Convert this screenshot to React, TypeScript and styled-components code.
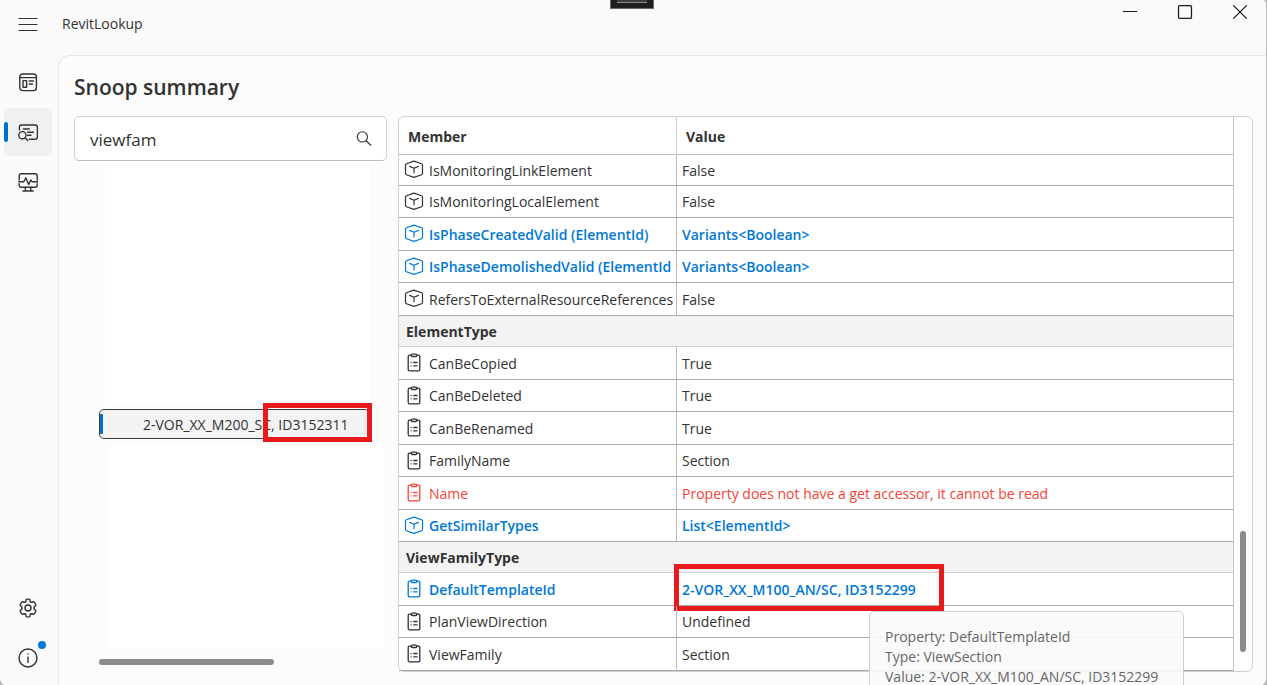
import React from "react";
import styled, { createGlobalStyle, css } from "styled-components";

const GlobalStyle = createGlobalStyle`
  *, *::before, *::after { box-sizing: border-box; }
  body {
    margin: 0;
    background: #b9b9b9;
    color: #323232;
    font-family: "Open Sans", "Noto Sans", sans-serif;
    font-size: 14px;
    line-height: 20px;
  }
  button, input { font: inherit; color: inherit; }
  button { border: 0; padding: 0; background: none; }
`;

const Window = styled.div`
  position: relative;
  display: flex;
  flex-direction: column;
  min-height: 100vh;
  margin-right: 1px;
  overflow: hidden;
  background: #fafafa;
  border-radius: 0 4px 8px 8px;
`;

const TitleBar = styled.header`
  display: flex;
  align-items: flex-start;
  height: 55px;
`;

const MenuButton = styled.button`
  display: flex;
  align-items: center;
  justify-content: center;
  width: 56px;
  height: 49px;
`;

const AppName = styled.span`
  flex: 1;
  padding: 14px 6px;
`;

const CaptionButton = styled.button`
  display: flex;
  align-items: center;
  justify-content: center;
  width: 55px;
  height: 24px;
  padding-left: 2px;
  color: #1a1a1a;
`;

const DockHandle = styled.div`
  position: absolute;
  top: 0;
  left: 50%;
  width: 44px;
  height: 9px;
  margin-left: -23px;
  padding: 0 6px;
  background: #1f1f1f;
  border: 1px solid #6a6a6a;
  border-top: 0;
`;

const DockGrip = styled.div`
  height: 3px;
  background: #3c3c3c;
  border-bottom: 1px solid #8a8a8a;
`;

const Body = styled.div`
  display: flex;
  flex: 1;
`;

const Rail = styled.nav`
  display: flex;
  flex-direction: column;
  gap: 2px;
  width: 58px;
  padding: 3px 4px 4px;
`;

const RailSpacer = styled.div`
  flex: 1;
`;

const RailButton = styled.button<{ $active?: boolean }>`
  position: relative;
  display: flex;
  align-items: center;
  justify-content: center;
  width: 48px;
  height: 48px;
  border-radius: 5px;
  ${(p) =>
    p.$active &&
    css`
      background: #f0f0f0;
      &::before {
        content: "";
        position: absolute;
        left: 0;
        top: 14px;
        width: 4px;
        height: 20px;
        border-radius: 2px;
        background: #0070cb;
      }
    `}
`;

const Dot = styled.span`
  position: absolute;
  top: 7px;
  right: 6px;
  width: 8px;
  height: 8px;
  border-radius: 50%;
  background: #0078d7;
`;

const Page = styled.main`
  display: flex;
  flex: 1;
  flex-direction: column;
  min-width: 0;
  padding: 15px 13px 14px 15px;
  background: #fcfcfc;
  border: solid #e8e8e8;
  border-width: 1px 0 0 1px;
  border-top-left-radius: 12px;
`;

const Heading = styled.h1`
  margin: 0;
  height: 45px;
  font-size: 21px;
  line-height: 32px;
  font-weight: 600;
`;

const Columns = styled.div`
  display: flex;
  flex: 1;
  gap: 11px;
`;

const TreePane = styled.section`
  display: flex;
  flex-direction: column;
  flex: none;
  width: 313px;
`;

const SearchBox = styled.label`
  display: flex;
  align-items: center;
  height: 45px;
  padding: 0 14px 0 15px;
  background: #fff;
  border: 1px solid #d2d2d2;
  border-bottom-color: #bdbdbd;
  border-radius: 5px;
`;

const SearchInput = styled.input`
  flex: 1;
  min-width: 0;
  padding: 2px 0 0;
  border: 0;
  outline: 0;
  background: none;
  font-size: 17px;
  line-height: 24px;
`;

const Tree = styled.div`
  display: flex;
  flex: 1;
  flex-direction: column;
  padding: 7px 2px 7px 25px;
`;

const BlankTop = styled.div`
  height: 234px;
  margin: 0 15px 7px 6px;
  background: #fff;
`;

const BlankBottom = styled.div`
  flex: 1;
  margin: 7px 0 11px 9px;
  background: #fff;
`;

const TreeItem = styled.button`
  position: relative;
  height: 30px;
  margin-right: 15px;
  padding: 1px 0 0 43px;
  text-align: left;
  white-space: nowrap;
  background: #f3f3f3;
  border: 1px solid #3c3c3c;
  border-radius: 5px;
  &::before {
    content: "";
    position: absolute;
    left: 0;
    top: 4px;
    width: 3px;
    height: 20px;
    border-radius: 1px;
    background: #0070cb;
  }
`;

const Highlight = styled.span<{ $at: "tree" | "cell" }>`
  position: absolute;
  border: 5px solid #e81a1c;
  pointer-events: none;
  ${(p) =>
    p.$at === "tree"
      ? css`
          inset: -7px -3px -4px auto;
          width: 109px;
        `
      : css`
          top: -9px;
          left: -3px;
          width: 270px;
          height: 47px;
        `}
`;

const HorizontalThumb = styled.div`
  width: 175px;
  height: 6px;
  border-radius: 3px;
  background: #8b8b8b;
`;

const GridFrame = styled.section`
  display: flex;
  flex: 1;
  min-width: 0;
  background: #fff;
  border: 1px solid #d0d0d0;
  border-radius: 6px;
`;

const Grid = styled.table`
  flex: 1;
  width: 100%;
  table-layout: fixed;
  border-spacing: 0;
  border-right: 1px solid #c4c4c4;
`;

const HeadCell = styled.th`
  height: 38px;
  padding: 2px 9px 0;
  text-align: left;
  font-weight: 700;
  border-bottom: 1px solid #bdbdbd;
  &:first-child {
    width: 278px;
    padding-left: 9px;
    border-right: 1px solid #cfcfcf;
  }
`;

const GroupCell = styled.th`
  height: 31px;
  padding: 1px 7px 0;
  text-align: left;
  font-weight: 700;
  background: #f3f3f3;
  border-bottom: 1px solid #d0d0d0;
`;

type Tone = "normal" | "link" | "error";
const toneColor = { normal: "#323232", link: "#0078d4", error: "#f44336" };

const Row = styled.tr<{ $tone: Tone; $height: number }>`
  height: ${(p) => p.$height}px;
  color: ${(p) => toneColor[p.$tone]};
  font-weight: ${(p) => (p.$tone === "link" ? 600 : 400)};
`;

const Cell = styled.td`
  position: relative;
  padding: 1px 5px 0;
  white-space: nowrap;
  border-bottom: 1px solid #a9a9a9;
  &:first-child {
    padding: 0 1px 0 5px;
    border-right: 1px solid #b9b9b9;
  }
`;

const Member = styled.div`
  display: flex;
  align-items: center;
  gap: 5px;
  svg {
    flex: none;
  }
`;

const MemberName = styled.span`
  padding-top: 1px;
`;

const ValueLink = styled.a`
  color: inherit;
  text-decoration: none;
`;

const ScrollTrack = styled.div`
  display: flex;
  align-items: flex-end;
  justify-content: center;
  width: 18px;
  padding-bottom: 19px;
`;

const VerticalThumb = styled.div`
  width: 6px;
  height: 121px;
  border-radius: 3px;
  background: #8b8b8b;
`;

const Tooltip = styled.div`
  position: absolute;
  z-index: 1;
  top: 38px;
  left: 192px;
  width: 315px;
  padding: 15px;
  color: #666;
  font-weight: 400;
  background: rgba(249, 249, 249, 0.9);
  border: 1px solid #d0d0d0;
  border-radius: 5px;
`;

const Icon = ({ size = 20, width = 1.4, children }: { size?: number; width?: number; children: React.ReactNode }) => (
  <svg
    width={size}
    height={size}
    viewBox="0 0 20 20"
    fill="none"
    stroke="currentColor"
    strokeWidth={width}
    strokeLinecap="round"
    strokeLinejoin="round"
    aria-hidden="true"
  >
    {children}
  </svg>
);

const MethodIcon = () => (
  <Icon width={1.2}>
    <path d="M10 1.1 17.6 3.7Q18.5 4 18.5 4.8V13.6Q18.5 14.4 17.6 14.7L10 17.4 2.4 14.7Q1.5 14.4 1.5 13.6V4.8Q1.5 4 2.4 3.7Z" />
    <path d="M5.6 6.4 10 8.2 14.4 6.4M10 8.2V12.8" />
  </Icon>
);

const PropertyIcon = () => (
  <Icon width={1.3}>
    <path d="M7.2 2.2H5.5Q4.2 2.2 4.2 3.5V16.5Q4.2 17.8 5.5 17.8H14.5Q15.8 17.8 15.8 16.5V3.5Q15.8 2.2 14.5 2.2H12.8" />
    <rect x="7.2" y="1.1" width="5.6" height="2.4" rx="1.1" />
    <path d="M9.7 9.5H13M9.7 12.8H13M7 9.5H7.1M7 12.8H7.1" />
  </Icon>
);

type Item = { name: string; value: string; method?: boolean; tone?: Tone; tip?: boolean };
type Group = { title?: string; heights: number[]; items: Item[] };

const groups: Group[] = [
  {
    heights: [31, 32, 33, 32, 33],
    items: [
      { name: "IsMonitoringLinkElement", value: "False", method: true },
      { name: "IsMonitoringLocalElement", value: "False", method: true },
      { name: "IsPhaseCreatedValid (ElementId)", value: "Variants<Boolean>", method: true, tone: "link" },
      { name: "IsPhaseDemolishedValid (ElementId", value: "Variants<Boolean>", method: true, tone: "link" },
      { name: "RefersToExternalResourceReferences", value: "False", method: true },
    ],
  },
  {
    title: "ElementType",
    heights: [33, 32, 33, 32, 33, 32],
    items: [
      { name: "CanBeCopied", value: "True" },
      { name: "CanBeDeleted", value: "True" },
      { name: "CanBeRenamed", value: "True" },
      { name: "FamilyName", value: "Section" },
      { name: "Name", value: "Property does not have a get accessor, it cannot be read", tone: "error" },
      { name: "GetSimilarTypes", value: "List<ElementId>", method: true, tone: "link" },
    ],
  },
  {
    title: "ViewFamilyType",
    heights: [33, 32, 33],
    items: [
      { name: "DefaultTemplateId", value: "2-VOR_XX_M100_AN/SC, ID3152299", tone: "link", tip: true },
      { name: "PlanViewDirection", value: "Undefined" },
      { name: "ViewFamily", value: "Section" },
    ],
  },
];

const MemberRow = ({ item, height }: { item: Item; height: number }) => (
  <Row $tone={item.tone ?? "normal"} $height={height}>
    <Cell>
      <Member>
        {item.method ? <MethodIcon /> : <PropertyIcon />}
        <MemberName>{item.name}</MemberName>
      </Member>
    </Cell>
    <Cell>
      {item.tone === "link" ? <ValueLink href="#">{item.value}</ValueLink> : item.value}
      {item.tip && (
        <>
          <Highlight $at="cell" />
          <Tooltip role="tooltip">
            Property: DefaultTemplateId
            <br />
            Type: ViewSection
            <br />
            Value: 2-VOR_XX_M100_AN/SC, ID3152299
          </Tooltip>
        </>
      )}
    </Cell>
  </Row>
);

export default function App() {
  return (
    <>
      <GlobalStyle />
      <Window>
        <TitleBar>
          <MenuButton aria-label="Menu">
            <Icon width={1.2}>
              <path d="M1 3.5H19M1 9.5H19M1 15.5H19" />
            </Icon>
          </MenuButton>
          <AppName>RevitLookup</AppName>
          <CaptionButton aria-label="Minimize">
            <Icon size={16} width={1.3}>
              <path d="M1.6 9.4H18.4" />
            </Icon>
          </CaptionButton>
          <CaptionButton aria-label="Maximize">
            <Icon size={16} width={1.6}>
              <rect x="1.9" y="1.9" width="16.2" height="16.2" rx="1.6" />
            </Icon>
          </CaptionButton>
          <CaptionButton aria-label="Close">
            <Icon size={16} width={1.6}>
              <path d="M2 2 18 18M18 2 2 18" />
            </Icon>
          </CaptionButton>
        </TitleBar>
        <DockHandle>
          <DockGrip />
        </DockHandle>
        <Body>
          <Rail>
            <RailButton aria-label="Dashboard">
              <Icon>
                <rect x="1.8" y="2" width="16.6" height="16.6" rx="2.8" />
                <path d="M1.8 5.6H18.4M5 8.6H8.6V15.2H5ZM11.2 9H15.4M11.2 12H14.4" />
              </Icon>
            </RailButton>
            <RailButton $active aria-label="Snoop summary">
              <Icon>
                <path d="M1.4 8V5.2Q1.4 3 3.4 3H17.2Q19.4 3 19.4 5.2V15Q19.4 17.2 17.2 17.2H11.4" />
                <circle cx="4.4" cy="13.2" r="3.6" />
                <path d="M7.1 15.9 9.8 18.6M5.4 7H11.4M9.6 10.2H15.4M9.6 13.2H13" />
              </Icon>
            </RailButton>
            <RailButton aria-label="Events">
              <Icon>
                <path d="M1.2 8V3.8Q1.2 1.8 3.2 1.8H17.2Q19.2 1.8 19.2 3.8V8M1.2 11.6V13.2Q1.2 15.2 3.2 15.2H17.2Q19.2 15.2 19.2 13.2V11.6" />
                <path d="M.8 9.7H5.8L7.8 5.8 10.6 12.6 12.8 8 14 9.7H19.4M7.4 15.2V18.8M12.8 15.2V18.8M5 19H15.2" />
              </Icon>
            </RailButton>
            <RailSpacer />
            <RailButton aria-label="Settings">
              <Icon>
                <path d="M8.2 1.4Q10 .9 11.8 1.4L12.2 3.6Q12.5 4.2 13.4 4.3L15.7 3.7Q17.2 5 17.9 7L16.4 8.7Q15.6 10 16.4 11.3L17.9 13Q17.2 15 15.7 16.3L13.4 15.7Q12.5 15.8 12.2 16.4L11.8 18.6Q10 19.1 8.2 18.6L7.8 16.4Q7.5 15.8 6.6 15.7L4.3 16.3Q2.8 15 2.1 13L3.6 11.3Q4.4 10 3.6 8.7L2.1 7Q2.8 5 4.3 3.7L6.6 4.3Q7.5 4.2 7.8 3.6Z" />
                <circle cx="10" cy="10" r="3" />
              </Icon>
            </RailButton>
            <RailButton aria-label="About">
              <Icon>
                <circle cx="10" cy="10" r="9" />
                <path d="M10 9V14.4M10 6H10.1" />
              </Icon>
              <Dot />
            </RailButton>
          </Rail>
          <Page>
            <Heading>Snoop summary</Heading>
            <Columns>
              <TreePane>
                <SearchBox>
                  <SearchInput type="text" aria-label="Search" defaultValue="viewfam" />
                  <Icon size={16} width={1.4}>
                    <circle cx="8" cy="7.4" r="6.4" />
                    <path d="M12.8 12.2 18.4 17.8" />
                  </Icon>
                </SearchBox>
                <Tree>
                  <BlankTop />
                  <TreeItem>
                    2-VOR_XX_M200_SC, ID3152311
                    <Highlight $at="tree" />
                  </TreeItem>
                  <BlankBottom />
                  <HorizontalThumb />
                </Tree>
              </TreePane>
              <GridFrame>
                <Grid>
                  <thead>
                    <tr>
                      <HeadCell scope="col">Member</HeadCell>
                      <HeadCell scope="col">Value</HeadCell>
                    </tr>
                  </thead>
                  {groups.map((group, g) => (
                    <tbody key={g}>
                      {group.title && (
                        <tr>
                          <GroupCell colSpan={2} scope="colgroup">
                            {group.title}
                          </GroupCell>
                        </tr>
                      )}
                      {group.items.map((item, i) => (
                        <MemberRow key={item.name} item={item} height={group.heights[i]} />
                      ))}
                    </tbody>
                  ))}
                </Grid>
                <ScrollTrack>
                  <VerticalThumb />
                </ScrollTrack>
              </GridFrame>
            </Columns>
          </Page>
        </Body>
      </Window>
    </>
  );
}
